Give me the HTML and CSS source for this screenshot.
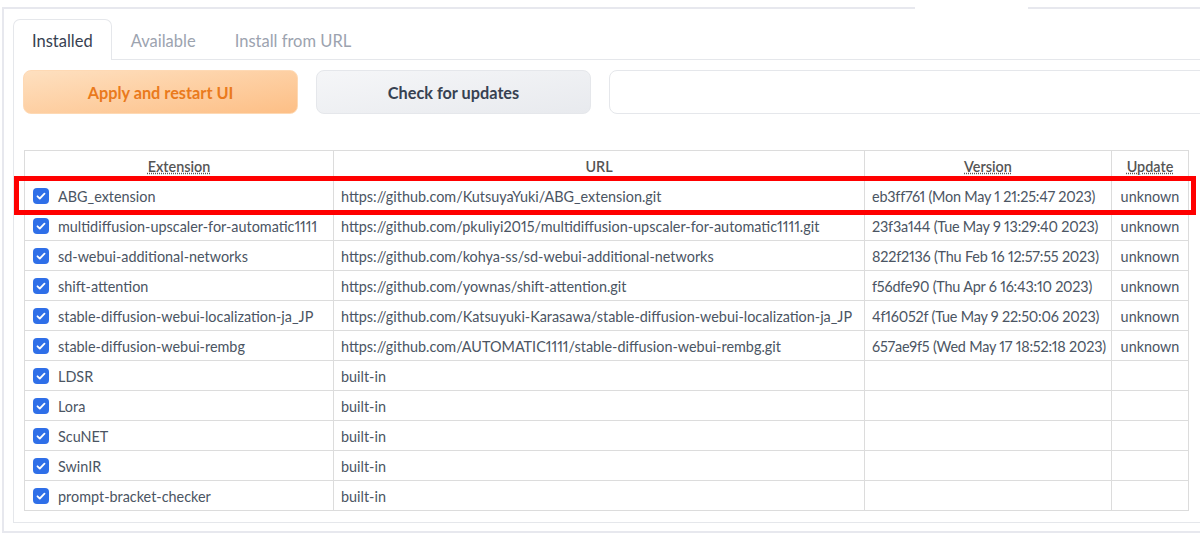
FILE: index.html
```html
<!DOCTYPE html>
<html lang="en">
<head>
    <meta charset="UTF-8">
    <title>Extensions</title>
    <link rel="stylesheet" href="styles.css">
</head>
<body>
    <div class="extensions-panel">
        <span class="parent-tab-gap"></span>

        <div class="tab-nav">
            <button class="tab selected">Installed</button>
            <button class="tab">Available</button>
            <button class="tab">Install from URL</button>
        </div>

        <div class="tab-body">
            <div class="actions">
                <button class="btn btn-primary">Apply and restart UI</button>
                <button class="btn btn-secondary">Check for updates</button>
                <input class="status-box" type="text">
            </div>

            <div class="table-wrap">
                <table class="ext-table">
                    <colgroup>
                        <col class="col-name">
                        <col class="col-url">
                        <col class="col-version">
                        <col class="col-update">
                    </colgroup>
                    <thead>
                        <tr>
                            <th><abbr>Extension</abbr></th>
                            <th>URL</th>
                            <th><abbr>Version</abbr></th>
                            <th><abbr>Update</abbr></th>
                        </tr>
                    </thead>
                    <tbody id="ext-rows"></tbody>
                </table>
            </div>
        </div>
    </div>

    <div class="highlight"></div>

    <script>
        const extensions = [
            ['ABG_extension', 'https://github.com/KutsuyaYuki/ABG_extension.git', 'eb3ff761 (Mon May 1 21:25:47 2023)', 'unknown'],
            ['multidiffusion-upscaler-for-automatic1111', 'https://github.com/pkuliyi2015/multidiffusion-upscaler-for-automatic1111.git', '23f3a144 (Tue May 9 13:29:40 2023)', 'unknown'],
            ['sd-webui-additional-networks', 'https://github.com/kohya-ss/sd-webui-additional-networks', '822f2136 (Thu Feb 16 12:57:55 2023)', 'unknown'],
            ['shift-attention', 'https://github.com/yownas/shift-attention.git', 'f56dfe90 (Thu Apr 6 16:43:10 2023)', 'unknown'],
            ['stable-diffusion-webui-localization-ja_JP', 'https://github.com/Katsuyuki-Karasawa/stable-diffusion-webui-localization-ja_JP', '4f16052f (Tue May 9 22:50:06 2023)', 'unknown'],
            ['stable-diffusion-webui-rembg', 'https://github.com/AUTOMATIC1111/stable-diffusion-webui-rembg.git', '657ae9f5 (Wed May 17 18:52:18 2023)', 'unknown'],
            ['LDSR', 'built-in', '', ''],
            ['Lora', 'built-in', '', ''],
            ['ScuNET', 'built-in', '', ''],
            ['SwinIR', 'built-in', '', ''],
            ['prompt-bracket-checker', 'built-in', '', '']
        ];

        const check = '<span class="checkbox"><svg viewBox="0 0 16 16" width="16" height="16"><path d="M4.5 8.3l2.3 2.2 4.7-4.8" fill="none" stroke="#fff" stroke-width="1.8" stroke-linecap="round" stroke-linejoin="round"/></svg></span>';

        const tbody = document.getElementById('ext-rows');
        extensions.forEach(function(ext) {
            const tr = document.createElement('tr');
            tr.innerHTML =
                '<td><label class="ext-name">' + check + '<span>' + ext[0] + '</span></label></td>' +
                '<td>' + ext[1] + '</td>' +
                '<td class="version">' + ext[2] + '</td>' +
                '<td class="update">' + ext[3] + '</td>';
            tbody.appendChild(tr);
        });
    </script>
</body>
</html>
```

FILE: styles.css
```css
* {
    box-sizing: border-box;
}

body {
    margin: 0;
    background: #fff;
    overflow: hidden;
    font-family: 'Lato', 'Liberation Sans', sans-serif;
    font-feature-settings: "pnum";
    color: #4b5563;
}

.extensions-panel {
    position: relative;
    width: 1260px;
    height: 526px;
    margin: 7px 0 0 2px;
    padding: 10px 0 0 9px;
    border: 2px solid #e7e8ee;
}

/* selected parent tab sits above this gap */
.parent-tab-gap {
    position: absolute;
    top: -2px;
    left: 909px;
    width: 117px;
    height: 2px;
    background: #fff;
    border-left: 2px solid #e7e8ee;
    border-right: 2px solid #e7e8ee;
}

.tab-nav {
    display: flex;
    height: 41px;
    border-bottom: 1px solid #e5e7eb;
}

.tab {
    font-family: inherit;
    font-size: 16.5px;
    color: #9ca3af;
    background: none;
    border: 1px solid transparent;
    border-bottom: none;
    padding: 2px 19px 0 18px;
    margin-bottom: -1px;
    cursor: pointer;
}

.tab.selected {
    color: #374151;
    background: #fff;
    border-color: #e5e7eb;
    border-radius: 7px 7px 0 0;
    padding: 2px 18px 0 18px;
}

.tab-body {
    height: 463px;
    padding: 10px 0 0 9px;
    border: 1px solid #e5e7eb;
    border-top: none;
}

.actions {
    display: flex;
    gap: 18px;
    height: 44px;
}

.btn {
    flex: 0 0 275px;
    font-family: inherit;
    font-size: 16.3px;
    font-weight: 700;
    border-radius: 8px;
    cursor: pointer;
}

.btn-primary {
    color: #ea7a1c;
    background: linear-gradient(to bottom right, #fee0c0, #fdbf86);
    border: 1px solid #fed9b4;
}

.btn-secondary {
    color: #374151;
    background: linear-gradient(to bottom right, #f5f6f8, #e8eaee);
    border: 1px solid #e5e7eb;
}

.status-box {
    flex: 0 0 700px;
    border: 1px solid #e5e7eb;
    border-radius: 8px;
    background: #fff;
}

.table-wrap {
    margin: 36px 0 0 1px;
}

.ext-table {
    width: 1164px;
    table-layout: fixed;
    border-collapse: collapse;
    font-size: 14.4px;
}

.col-name { width: 309px; }
.col-url { width: 531px; }
.col-version { width: 247px; }
.col-update { width: 77px; }

.ext-table th,
.ext-table td {
    height: 30px;
    padding: 1px 7px 0;
    border: 1px solid #dcdcdc;
    white-space: nowrap;
    overflow: hidden;
    text-align: left;
}

.ext-table th {
    text-align: center;
    font-weight: 600;
    color: #555;
}

.ext-table abbr {
    text-decoration: underline dotted;
}

.ext-table td.version {
    letter-spacing: -0.2px;
}

.ext-table td.update {
    text-align: center;
    padding: 1px 0 0;
}

.ext-name {
    display: flex;
    align-items: center;
    gap: 9px;
}

.checkbox {
    display: inline-flex;
    width: 16px;
    height: 16px;
    margin-left: 1px;
    border-radius: 4px;
    background: #2f6fe8;
    flex-shrink: 0;
}

.highlight {
    position: absolute;
    left: 14px;
    top: 176px;
    width: 1182px;
    height: 39px;
    border: 5px solid #ff0000;
}
```
